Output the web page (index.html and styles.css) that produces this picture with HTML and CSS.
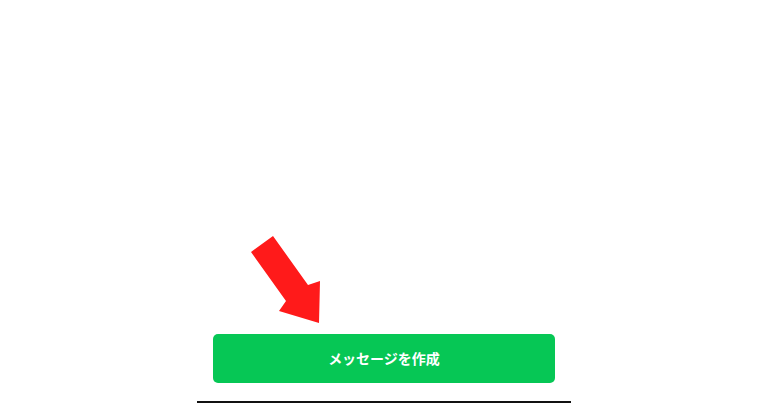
FILE: index.html
```html
<!DOCTYPE html>
<html lang="ja">
<head>
<meta charset="utf-8">
<title>メッセージを作成</title>
<link rel="stylesheet" href="styles.css">
</head>
<body>
<div class="screen">
  <svg class="arrow" width="768" height="403" viewBox="0 0 768 403" aria-hidden="true">
    <polygon points="251,252 273,236 308,285 320,281 319,323 279,311 286,301" fill="#ff1a1a"/>
  </svg>
  <button class="btn" type="button">メッセージを作成</button>
  <div class="bar"></div>
</div>
</body>
</html>
```

FILE: styles.css
```css
html, body {
  margin: 0;
  padding: 0;
  background: #ffffff;
}
.screen {
  position: relative;
  width: 768px;
  height: 403px;
  display: flex;
  flex-direction: column;
  align-items: center;
  justify-content: flex-end;
  overflow: hidden;
}
.arrow {
  position: absolute;
  left: 0;
  top: 0;
}
.btn {
  width: 342px;
  height: 49px;
  margin: 0 0 18px 0;
  border: none;
  border-radius: 5px;
  background: #06c755;
  color: #ffffff;
  font-family: "Noto Sans CJK JP", "Noto Sans", sans-serif;
  font-weight: 700;
  font-size: 14px;
  line-height: 49px;
  padding: 0;
  text-align: center;
}
.bar {
  width: 374px;
  height: 2px;
  background: #111111;
}
```
